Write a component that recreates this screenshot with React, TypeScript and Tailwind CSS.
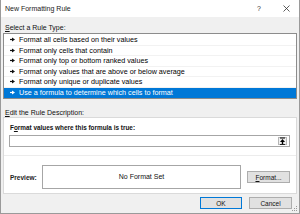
import React from "react";

const Arrow = ({ color }: { color: string }) => (
  <svg width="5" height="5" viewBox="0 0 5 5" className="shrink-0">
    <line x1="0" y1="2.5" x2="2.5" y2="2.5" stroke={color} strokeWidth="1.2" />
    <polygon points="2,0.5 5,2.5 2,4.5" fill={color} />
  </svg>
);

const rows = [
  "Format all cells based on their values",
  "Format only cells that contain",
  "Format only top or bottom ranked values",
  "Format only values that are above or below average",
  "Format only unique or duplicate values",
  "Use a formula to determine which cells to format",
];

export default function App() {
  return (
    <div
      className="w-[300px] h-[214px] flex flex-col border-x border-b border-[#9a9a9a] bg-[#f0f0f0] text-black overflow-hidden"
      style={{ fontFamily: '"Liberation Sans", Arial, sans-serif' }}
    >
      {/* Title bar */}
      <div className="h-[17px] bg-white flex items-center pl-[4px] shrink-0">
        <span className="text-[7px] leading-[9px] text-[#1a1a1a]">New Formatting Rule</span>
        <div className="ml-auto flex items-center">
          <span className="w-[14px] text-center text-[7px] leading-[9px] text-[#333]">?</span>
          <span className="w-[14px] ml-[13px] mr-[6px] flex justify-center">
            <svg width="7" height="7" viewBox="0 0 7 7">
              <line x1="0.5" y1="0.5" x2="6.5" y2="6.5" stroke="#333" strokeWidth="0.8" />
              <line x1="6.5" y1="0.5" x2="0.5" y2="6.5" stroke="#333" strokeWidth="0.8" />
            </svg>
          </span>
        </div>
      </div>

      {/* Body */}
      <div className="flex-1 flex flex-col px-[2px] relative">
        <div className="pt-[6px] pl-[2px] text-[7px] leading-[9px] text-[#111]">
          <span className="underline underline-offset-1">S</span>elect a Rule Type:
        </div>
        <div className="mt-[1px] border border-[#8c8c8c] bg-white pt-[1px] h-[66px] flex flex-col">
          {rows.map((r, i) => {
            const sel = i === rows.length - 1;
            return (
              <div
                key={r}
                className={
                  sel
                    ? "h-[10.5px] flex items-center gap-[2px] pl-[6px] bg-[#0078d7] text-white"
                    : "h-[10.5px] flex items-center gap-[2px] pl-[6px] border-b border-[#f2f2f2] text-[#000]"
                }
              >
                <Arrow color={sel ? "#ffffff" : "#111111"} />
                <span className="text-[7.2px] leading-[9px] pl-[2px] whitespace-nowrap">{r}</span>
              </div>
            );
          })}
        </div>

        <div className="mt-[9px] pl-[2px] text-[7px] leading-[9px] text-[#111]">
          <span className="underline underline-offset-1">E</span>dit the Rule Description:
        </div>
        <div className="border border-[#dadada] bg-white h-[77px] flex flex-col">
          <div className="pt-[5px] pl-[6px] text-[6.4px] leading-[9px] font-bold text-[#111]">
            F<span className="underline underline-offset-1">o</span>rmat values where this formula is true:
          </div>
          <div className="mt-[3px] ml-[5px] mr-[6px] h-[12px] border border-[#a6a6a6] bg-white flex justify-end items-stretch p-[1px] pr-[2px]">
            <div className="w-[9px] border border-[#b5b5b5] bg-[#f0f0f0] flex items-center justify-center">
              <svg width="7" height="8" viewBox="0 0 7 8">
                <line x1="1" y1="1" x2="6" y2="1" stroke="#000" strokeWidth="1" />
                <polygon points="3.5,2 1,5 6,5" fill="#000" />
                <line x1="3.5" y1="5" x2="3.5" y2="7" stroke="#000" strokeWidth="1.4" />
                <line x1="1" y1="7.5" x2="6" y2="7.5" stroke="#000" strokeWidth="0.8" />
              </svg>
            </div>
          </div>
          <div className="mt-[8px] border-t border-[#ececec]" />
          <div className="mt-[9px] flex items-center pl-[6px]">
            <span className="w-[32px] text-[6.5px] leading-[9px] font-bold text-[#222]">Preview:</span>
            <div className="w-[199px] h-[24px] border border-[#a6a6a6] flex items-center justify-center text-[7px] text-[#111]">
              No Format Set
            </div>
            <button className="ml-[6px] w-[43px] h-[12px] border border-[#adadad] bg-[#e1e1e1] text-[6.5px] leading-[9px] text-[#111] flex items-center justify-center">
              <span className="underline underline-offset-1">F</span>ormat...
            </button>
          </div>
        </div>

        <div className="mt-[3px] flex justify-end pr-[5px] gap-[7px]">
          <button className="w-[42px] h-[12px] border border-[#0078d7] bg-[#e1e1e1] text-[6.5px] leading-[9px] text-[#111] flex items-center justify-center">
            OK
          </button>
          <button className="w-[43px] h-[12px] border border-[#adadad] bg-[#e1e1e1] text-[6.5px] leading-[9px] text-[#111] flex items-center justify-center">
            Cancel
          </button>
        </div>

        <svg width="7" height="7" viewBox="0 0 7 7" className="absolute right-[1px] bottom-[1px]">
          <rect x="5" y="1" width="1" height="1" fill="#9a9a9a" />
          <rect x="3" y="3" width="1" height="1" fill="#9a9a9a" />
          <rect x="5" y="3" width="1" height="1" fill="#9a9a9a" />
          <rect x="1" y="5" width="1" height="1" fill="#9a9a9a" />
          <rect x="3" y="5" width="1" height="1" fill="#9a9a9a" />
          <rect x="5" y="5" width="1" height="1" fill="#9a9a9a" />
        </svg>
      </div>
    </div>
  );
}
